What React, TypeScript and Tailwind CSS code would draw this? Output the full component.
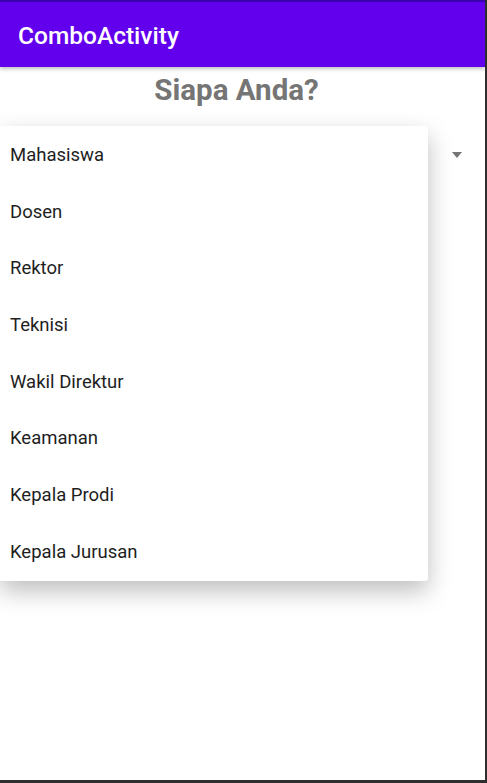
import React from "react";

const roles = [
  "Mahasiswa",
  "Dosen",
  "Rektor",
  "Teknisi",
  "Wakil Direktur",
  "Keamanan",
  "Kepala Prodi",
  "Kepala Jurusan",
];

export default function App() {
  return (
    <div
      className="relative flex h-[783px] w-[487px] flex-col overflow-hidden border-r-2 border-b-[3px] border-[#2e2e2e] bg-white"
      style={{ fontFamily: "Roboto, 'Noto Sans', sans-serif" }}
    >
      <div className="h-[2px] bg-[#3d00b5]" />
      <div className="relative z-10 flex h-[65px] items-center bg-[#6200ee] pl-[18px] pt-[4px] shadow-[0_2px_4px_rgba(0,0,0,0.25)]">
        <span className="text-[24.5px] font-medium leading-none text-white">ComboActivity</span>
      </div>

      <div className="flex flex-col">
        <h1 className="mt-[6px] pr-[12px] text-center text-[29.5px] font-bold leading-[34px] text-[#757575]">
          Siapa Anda?
        </h1>
        <div className="mt-[20px] flex h-[56px] items-center justify-end pr-[22px]">
          <svg width="12" height="6" viewBox="0 0 12 6">
            <path d="M1 0h10l-5 6z" fill="#757575" />
          </svg>
        </div>
      </div>

      {/* open spinner popup */}
      <div className="absolute left-0 top-[126px] z-20 w-[428px] rounded-r-[3px] bg-white pt-[1.5px] shadow-[0_10px_24px_rgba(0,0,0,0.26)]">
        {roles.map((r) => (
          <div key={r} className="flex h-[56.7px] items-center pl-[10px] text-[18.5px] text-[#1e1e1e]">
            {r}
          </div>
        ))}
      </div>
    </div>
  );
}
